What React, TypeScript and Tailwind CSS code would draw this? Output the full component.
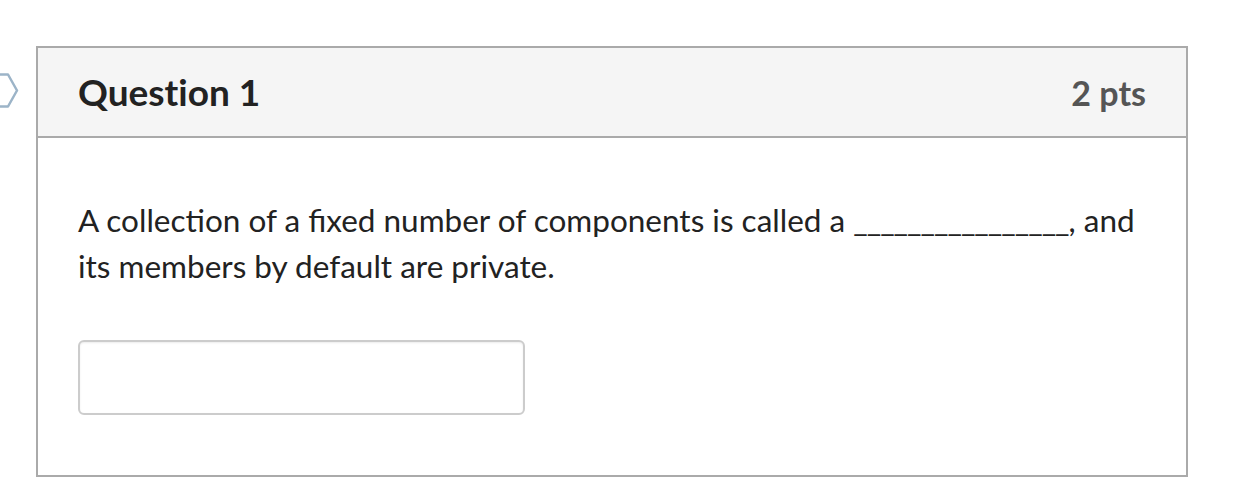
const QuestionFlag = () => (
    <svg width="36" height="36" viewBox="0 0 36 36" className="mt-[27px] shrink-0">
        {/* right end of the question bookmark, cropped by the page edge */}
        <path d="M-4 1.5 H8 L17 17.5 L8 33.5 H-4" fill="none" stroke="#9cb4c8" strokeWidth="2.5" strokeLinejoin="round" />
    </svg>
);

const App = () => {
    return (
        <div className="w-[1244px] h-[490px] bg-white pt-[46px] flex items-start" style={{ fontFamily: 'Lato, "Noto Sans", sans-serif' }}>
            <QuestionFlag />

            <div className="w-[1152px] border-2 border-[#aaaaaa] bg-white">
                <div className="h-[90px] bg-[#f5f5f5] border-b-2 border-[#aaaaaa] flex items-center justify-between px-10 [font-variant-ligatures:none]">
                    <h2 className="text-[37px] font-bold text-[#222222]">Question 1</h2>
                    <div className="text-[34px] font-bold text-[#555555]">2 pts</div>
                </div>

                <div className="pl-10 pr-[36px] pt-[59px] pb-[60px]">
                    <p className="text-[31.5px] leading-[46px] text-[#222222]">
                        A collection of a fixed number of components is called a{' '}
                        <span className="tracking-[-1px]">________________</span>, and its members by default are private.
                    </p>

                    <input
                        type="text"
                        aria-label="Answer"
                        className="mt-[51px] block w-[447px] h-[75px] rounded-[6px] border-2 border-[#cccccc] bg-white shadow-[inset_0_1px_2px_rgba(0,0,0,0.08)] outline-none"
                    />
                </div>
            </div>
        </div>
    );
};

export default App;
